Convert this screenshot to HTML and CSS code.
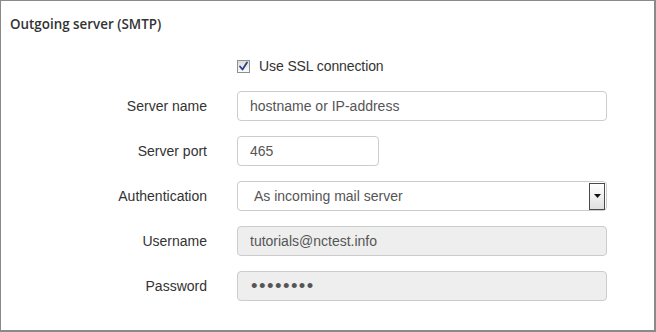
FILE: index.html
```html
<!DOCTYPE html>
<html>
<head>
<meta charset="utf-8">
<link rel="stylesheet" href="styles.css">
</head>
<body>
<div class="panel">
  <div class="heading">Outgoing server (SMTP)</div>
  <div class="form">
    <div class="check-row">
      <span class="checkbox"><svg width="11" height="11" viewBox="0 0 11 11"><path d="M2 5.5 L4.5 8.5 L9 1.5" fill="none" stroke="#2c3f8f" stroke-width="1.8" stroke-linecap="round" stroke-linejoin="round"/></svg></span>
      <span class="check-label">Use SSL connection</span>
    </div>
    <div class="row">
      <label class="label">Server name</label>
      <div class="input wide">hostname or IP-address</div>
    </div>
    <div class="row">
      <label class="label">Server port</label>
      <div class="input narrow">465</div>
    </div>
    <div class="row">
      <label class="label">Authentication</label>
      <div class="input wide select"><span class="select-text">As incoming mail server</span><span class="select-btn"><svg width="7" height="4" viewBox="0 0 7 4"><path d="M0 0 H7 L3.5 4 Z" fill="#111"/></svg></span></div>
    </div>
    <div class="row">
      <label class="label muted">Username</label>
      <div class="input wide disabled">tutorials@nctest.info</div>
    </div>
    <div class="row">
      <label class="label muted">Password</label>
      <div class="input wide disabled dots">••••••••</div>
    </div>
  </div>
</div>
</body>
</html>
```
FILE: styles.css
```css
html, body {
  margin: 0;
  padding: 0;
  background: #fff;
}
.panel {
  width: 656px;
  height: 332px;
  box-sizing: border-box;
  border-top: 1px solid #8a8a8a;
  border-left: 1px solid #8a8a8a;
  border-right: 2px solid #8a8a8a;
  border-bottom: 2px solid #8a8a8a;
  background: #fff;
  font-family: "Liberation Sans", Arial, sans-serif;
  font-size: 14px;
  color: #333;
}
.heading {
  font-family: "Open Sans", sans-serif;
  font-weight: 600;
  font-size: 13.4px;
  line-height: 20px;
  padding: 13px 0 0 9px;
  color: #333;
}
.form {
  margin-top: 17px;
  display: flex;
  flex-direction: column;
  gap: 15px;
}
.check-row {
  height: 30px;
  display: flex;
  align-items: center;
  padding-left: 236px;
  margin-bottom: -5px;
}
.checkbox {
  width: 11px;
  height: 11px;
  border: 1px solid #8e8f8f;
  background: linear-gradient(#dcdcdc, #fbfbfb);
  display: flex;
  align-items: center;
  justify-content: center;
  margin-right: 9px;
}
.checkbox svg { display: block; }
.check-label {
  color: #333;
  letter-spacing: -0.1px;
}
.row {
  display: grid;
  grid-template-columns: 206px auto;
  column-gap: 30px;
  align-items: center;
  height: 30px;
}
.label {
  text-align: right;
  color: #333;
}
.label.muted { color: #333; }
.input {
  height: 30px;
  box-sizing: border-box;
  border: 1px solid #cccccc;
  border-radius: 4px;
  padding-left: 12px;
  display: flex;
  align-items: center;
  color: #555;
  background: #fff;
}
.wide { width: 370px; }
.narrow { width: 142px; }
.select {
  padding-left: 16px;
  justify-content: space-between;
  padding-right: 0;
}
.select-btn {
  width: 16px;
  height: 27px;
  box-sizing: border-box;
  border: 1px solid #4a4a4a;
  background: linear-gradient(#ffffff, #e0e0e0);
  display: flex;
  align-items: center;
  justify-content: center;
  margin-right: 1px;
}
.select-btn svg { display: block; }
.disabled {
  background: #eeeeee;
}
.dots {
  font-size: 18.5px;
  letter-spacing: 1.5px;
  color: #555;
  padding-left: 13px;
}
```
